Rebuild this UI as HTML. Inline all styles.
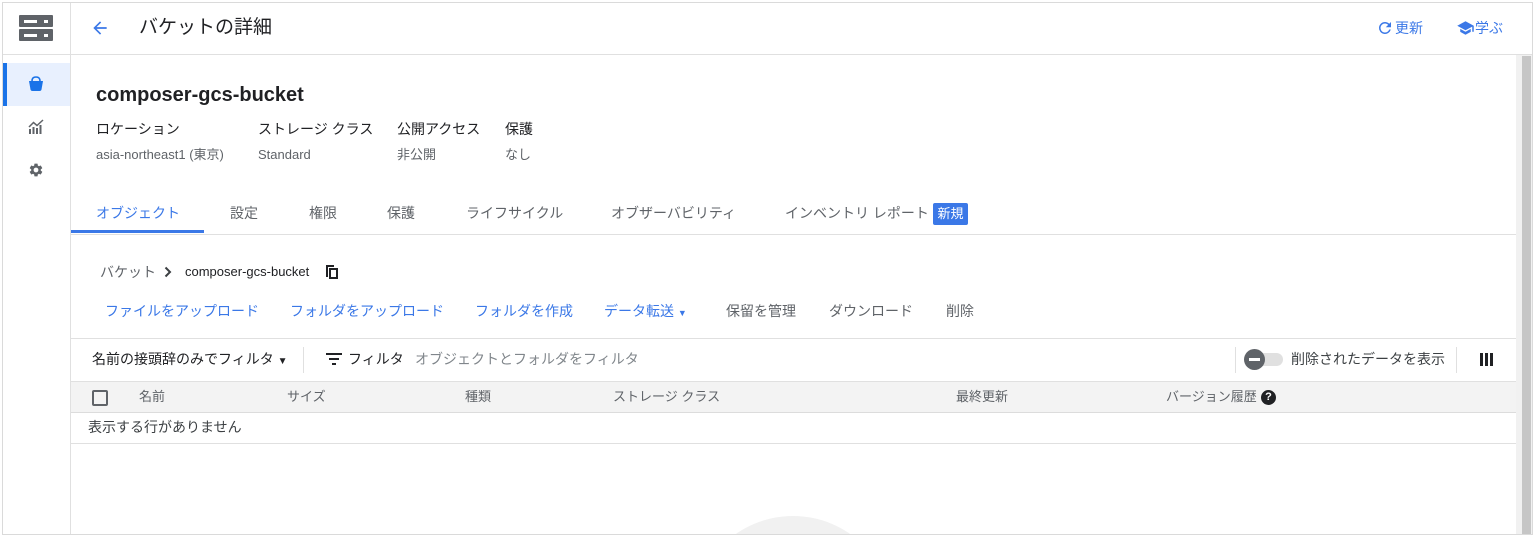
<!DOCTYPE html>
<html style="width:1536px;height:537px;overflow:hidden"><head><meta charset="utf-8"><style>
*{margin:0;padding:0;box-sizing:border-box}
body{width:1536px;height:537px;background:#fff;overflow:hidden;font-family:"Liberation Sans","Noto Sans CJK JP",sans-serif;color:#202124}
#w{position:relative;width:1536px;height:537px;overflow:hidden}
.a{position:absolute;white-space:nowrap}
.t{font-size:14px;line-height:18px}
.g{color:#5f6368}
.b{color:#3b78e7}
.h{position:absolute;background:#e0e0e0;height:1px}
</style></head><body><div id="w">
<div class="a" style="left:693px;top:516px;width:200px;height:18px;overflow:hidden"><div style="width:200px;height:200px;border-radius:50%;background:#f1f1f1"></div></div>
<div class="a" style="left:2px;top:2px;width:1531px;height:533px;border:1px solid #dadada"></div>
<div class="a" style="left:70px;top:3px;width:1px;height:531px;background:#e0e0e0"></div>
<div class="h" style="left:3px;top:54px;width:1529px"></div>
<!-- logo -->
<div class="a" style="left:19px;top:15px;width:34px;height:12px;background:#5f6368;border-radius:1px"></div>
<div class="a" style="left:19px;top:29px;width:34px;height:12px;background:#5f6368;border-radius:1px"></div>
<div class="a" style="left:24px;top:20px;width:13px;height:3px;background:#fff"></div>
<div class="a" style="left:44px;top:20px;width:4px;height:3px;background:#fff"></div>
<div class="a" style="left:24px;top:34px;width:13px;height:3px;background:#fff"></div>
<div class="a" style="left:44px;top:34px;width:4px;height:3px;background:#fff"></div>
<!-- nav -->
<div class="a" style="left:3px;top:63px;width:67px;height:43px;background:#e8f0fe"></div>
<div class="a" style="left:3px;top:63px;width:4px;height:43px;background:#1a73e8"></div>
<svg class="a" style="left:28px;top:76px" width="16" height="16" viewBox="0 0 16 16"><path d="M4 5 Q4 1 8 1 Q12 1 12 5" fill="none" stroke="#1a73e8" stroke-width="1.6"/><path d="M1 5h14l-1.5 8.5q-.3 1.5-2 1.5h-7q-1.7 0-2-1.5z" fill="#1a73e8"/></svg>
<svg class="a" style="left:28px;top:119px" width="16" height="16" viewBox="0 0 16 16" fill="#5f6368"><rect x="1" y="10" width="2" height="5"/><rect x="4.5" y="8" width="2" height="7"/><rect x="8" y="9" width="2" height="6"/><rect x="11.5" y="6" width="2" height="9"/><path d="M1 8 L5.5 3.5 L9 6.5 L15 1" fill="none" stroke="#5f6368" stroke-width="1.5"/></svg>
<svg class="a" style="left:28px;top:162px" width="16" height="16" viewBox="0 0 24 24"><path d="M19.14 12.94c.04-.3.06-.61.06-.94s-.02-.64-.07-.94l2.030-1.58a.49.49 0 0 0 .12-.61l-1.92-3.32a.49.49 0 0 0-.59-.22l-2.39.96c-.5-.38-1.030-.7-1.62-.94l-.36-2.54a.48.48 0 0 0-.48-.41h-3.84c-.24 0-.43.17-.47.41l-.36 2.54c-.59.24-1.13.57-1.62.94l-2.39-.96a.48.48 0 0 0-.59.22L2.74 8.87c-.12.21-.08.47.12.61l2.03 1.58c-.05.3-.09.63-.09.94s.02.64.07.94l-2.03 1.58a.49.49 0 0 0-.12.61l1.92 3.32c.12.22.37.29.59.22l2.39-.96c.5.38 1.03.7 1.62.94l.36 2.54c.05.24.24.41.48.41h3.84c.24 0 .44-.17.47-.41l.36-2.54c.59-.24 1.13-.56 1.62-.94l2.39.96c.22.08.47 0 .59-.22l1.92-3.32c.12-.22.07-.47-.12-.61zM12 15.6A3.6 3.6 0 1 1 12 8.4a3.6 3.6 0 0 1 0 7.2z" fill="#5f6368"/></svg>
<!-- header -->
<svg class="a" style="left:90px;top:18px" width="20" height="20" viewBox="0 0 24 24"><path d="M20 11H7.83l5.59-5.59L12 4l-8 8 8 8 1.41-1.41L7.83 13H20z" fill="#3b78e7"/></svg>
<div class="a" style="left:139px;top:16px;font-size:19px;line-height:24px">バケットの詳細</div>
<svg class="a" style="left:1376px;top:19px" width="18" height="18" viewBox="0 0 24 24"><path d="M17.65 6.35A7.96 7.96 0 0 0 12 4a8 8 0 1 0 7.73 10h-2.08A6 6 0 1 1 12 6c1.66 0 3.14.69 4.22 1.78L13 11h7V4z" fill="#3b78e7"/></svg>
<div class="a b t" style="left:1395px;top:19px">更新</div>
<svg class="a" style="left:1456px;top:19px" width="19" height="18" viewBox="0 0 24 24"><path d="M5 13.18v4L12 21l7-3.82v-4L12 17zM12 3 1 9l11 6 9-4.91V17h2V9z" fill="#3b78e7"/></svg>
<div class="a b t" style="left:1475px;top:19px">学ぶ</div>
<!-- scrollbar -->
<div class="a" style="left:1516px;top:55px;width:16px;height:479px;background:#f1f1f1"></div>
<div class="a" style="left:1522px;top:56px;width:9px;height:478px;background:#c6c6c6"></div>
<!-- info -->
<div class="a" style="left:96px;top:83px;font-size:20px;font-weight:bold;line-height:24px">composer-gcs-bucket</div>
<div class="a t" style="left:96px;top:120px">ロケーション</div>
<div class="a t" style="left:258px;top:120px">ストレージ クラス</div>
<div class="a t" style="left:397px;top:120px">公開アクセス</div>
<div class="a t" style="left:505px;top:120px">保護</div>
<div class="a t g" style="left:96px;top:146px;font-size:13px">asia-northeast1 (東京)</div>
<div class="a t g" style="left:258px;top:146px;font-size:13px">Standard</div>
<div class="a t g" style="left:397px;top:146px;font-size:13px">非公開</div>
<div class="a t g" style="left:505px;top:146px;font-size:13px">なし</div>
<!-- tabs -->
<div class="a t b" style="left:96px;top:204px">オブジェクト</div>
<div class="a t g" style="left:230px;top:204px">設定</div>
<div class="a t g" style="left:309px;top:204px">権限</div>
<div class="a t g" style="left:387px;top:204px">保護</div>
<div class="a t g" style="left:466px;top:204px">ライフサイクル</div>
<div class="a t g" style="left:611px;top:204px">オブザーバビリティ</div>
<div class="a t g" style="left:785px;top:204px">インベントリ レポート</div>
<div class="a" style="left:933px;top:203px;width:35px;height:22px;background:#3b78e7;border-radius:2px;color:#fff;font-size:13px;line-height:22px;text-align:center">新規</div>
<div class="h" style="left:71px;top:234px;width:1445px"></div>
<div class="a" style="left:71px;top:230px;width:133px;height:3px;background:#3b78e7"></div>
<!-- breadcrumb -->
<div class="a t g" style="left:100px;top:263px">バケット</div>
<svg class="a" style="left:164px;top:266px" width="8" height="12" viewBox="0 0 8 12"><path d="M1.5 1.5 L6 6 L1.5 10.5" fill="none" stroke="#3c4043" stroke-width="2"/></svg>
<div class="a t" style="left:185px;top:263px;font-size:13px">composer-gcs-bucket</div>
<svg class="a" style="left:325px;top:264px" width="14" height="16" viewBox="0 0 14 16"><path d="M1 1h8v2H3v10H1z" fill="#202124"/><rect x="5" y="5" width="7" height="9" fill="none" stroke="#202124" stroke-width="2"/></svg>
<!-- actions -->
<div class="a t b" style="left:105px;top:302px">ファイルをアップロード</div>
<div class="a t b" style="left:290px;top:302px">フォルダをアップロード</div>
<div class="a t b" style="left:475px;top:302px">フォルダを作成</div>
<div class="a t b" style="left:604px;top:302px">データ転送 <span style="font-size:9px">▼</span></div>
<div class="a t g" style="left:726px;top:302px">保留を管理</div>
<div class="a t g" style="left:829px;top:302px">ダウンロード</div>
<div class="a t g" style="left:946px;top:302px">削除</div>
<div class="h" style="left:71px;top:338px;width:1445px"></div>
<!-- filter -->
<div class="a t" style="left:92px;top:350px">名前の接頭辞のみでフィルタ <span style="font-size:10px">▼</span></div>
<div class="a" style="left:303px;top:347px;width:1px;height:26px;background:#e0e0e0"></div>
<svg class="a" style="left:326px;top:353px" width="16" height="12" viewBox="0 0 16 12"><rect x="0" y="0" width="16" height="2" fill="#202124"/><rect x="3" y="5" width="10" height="2" fill="#202124"/><rect x="6" y="10" width="4" height="2" fill="#202124"/></svg>
<div class="a t" style="left:348px;top:350px">フィルタ</div>
<div class="a t" style="left:415px;top:350px;color:#80868b">オブジェクトとフォルダをフィルタ</div>
<div class="a" style="left:1235px;top:347px;width:1px;height:26px;background:#e0e0e0"></div>
<div class="a" style="left:1250px;top:353px;width:33px;height:13px;background:#e0e0e0;border-radius:7px"></div>
<div class="a" style="left:1244px;top:349px;width:21px;height:21px;background:#5f6368;border-radius:50%"></div>
<div class="a" style="left:1249px;top:358px;width:11px;height:3px;background:#fff"></div>
<div class="a t" style="left:1291px;top:350px;color:#3c4043">削除されたデータを表示</div>
<div class="a" style="left:1456px;top:347px;width:1px;height:26px;background:#e0e0e0"></div>
<svg class="a" style="left:1480px;top:353px" width="13" height="13" viewBox="0 0 13 13" fill="#202124"><rect x="0" y="0" width="3" height="13"/><rect x="5" y="0" width="3" height="13"/><rect x="10" y="0" width="3" height="13"/></svg>
<!-- table -->
<div class="a" style="left:71px;top:381px;width:1445px;height:32px;background:#f3f3f3;border-top:1px solid #e0e0e0;border-bottom:1px solid #dcdcdc"></div>
<div class="a" style="left:92px;top:390px;width:16px;height:16px;border:2px solid #5f6368;border-radius:2px"></div>
<div class="a t g" style="left:139px;top:388px;font-size:13px">名前</div>
<div class="a t g" style="left:287px;top:388px;font-size:13px">サイズ</div>
<div class="a t g" style="left:465px;top:388px;font-size:13px">種類</div>
<div class="a t g" style="left:613px;top:388px;font-size:13px">ストレージ クラス</div>
<div class="a t g" style="left:956px;top:388px;font-size:13px">最終更新</div>
<div class="a t g" style="left:1166px;top:388px;font-size:13px">バージョン履歴</div>
<div class="a" style="left:1261px;top:390px;width:15px;height:15px;background:#202124;border-radius:50%;color:#fff;font-size:11px;font-weight:bold;line-height:15px;text-align:center">?</div>
<div class="a t" style="left:88px;top:418px;color:#3c4043">表示する行がありません</div>
<div class="h" style="left:71px;top:443px;width:1445px"></div>
</div></body></html>
